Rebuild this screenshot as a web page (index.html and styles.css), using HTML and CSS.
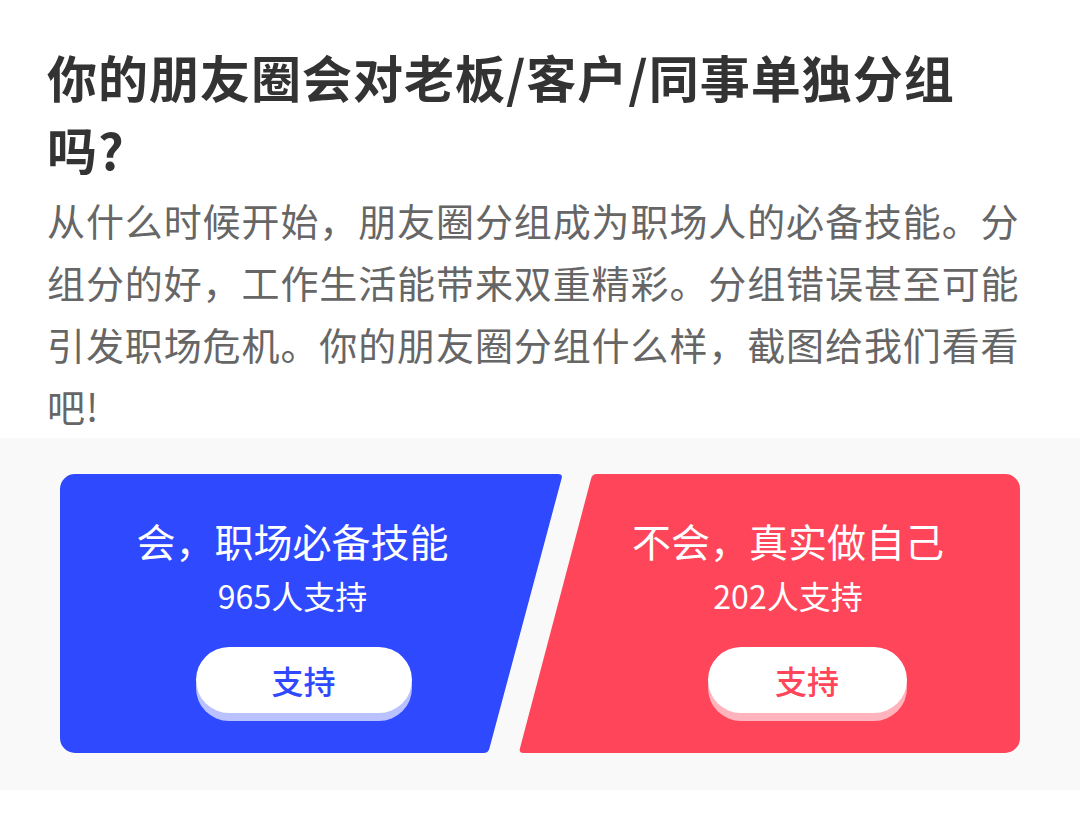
FILE: index.html
```html
<!DOCTYPE html>
<html lang="zh-CN">
<head>
<meta charset="utf-8">
<title>朋友圈分组</title>
<link rel="stylesheet" href="styles.css">
</head>
<body>
<article class="topic">
  <h1 class="topic-title">你的朋友圈会对老板/客户/同事单独分组吗?</h1>
  <p class="topic-desc">从什么时候开始，朋友圈分组成为职场人的必备技能。分组分的好，工作生活能带来双重精彩。分组错误甚至可能引发职场危机。你的朋友圈分组什么样，截图给我们看看吧!</p>
</article>
<section class="vote">
  <div class="vote-card vote-card--yes">
    <div class="vote-option">会，职场必备技能</div>
    <div class="vote-count">965人支持</div>
    <button class="vote-btn vote-btn--yes" type="button">支持</button>
  </div>
  <div class="vote-card vote-card--no">
    <div class="vote-option">不会，真实做自己</div>
    <div class="vote-count">202人支持</div>
    <button class="vote-btn vote-btn--no" type="button">支持</button>
  </div>
</section>
</body>
</html>
```

FILE: styles.css
```css
html, body {
  margin: 0;
  padding: 0;
  background: #ffffff;
}

body {
  width: 1080px;
  height: 817px;
  overflow: hidden;
  font-family: "Noto Sans CJK SC", "Noto Sans", sans-serif;
}

.topic {
  padding: 40px 47px 0;
}

.topic-title {
  margin: 0;
  max-width: 960px;
  font-size: 50px;
  line-height: 72px;
  font-weight: 700;
  letter-spacing: 1px;
  color: #333333;
}

.topic-desc {
  margin: 5px 0 0;
  font-size: 38px;
  line-height: 62px;
  letter-spacing: 0.9px;
  color: #666666;
}

.vote {
  margin-top: 1px;
  background: #f9f9f9;
  padding: 36px 60px 37px;
  display: flex;
}

.vote-card {
  height: 279px;
  box-sizing: border-box;
  padding-top: 42px;
  display: flex;
  flex-direction: column;
  align-items: center;
  color: #ffffff;
}

/* left option: rounded on the outer side, slanted edge on the right */
.vote-card--yes {
  width: 502px;
  padding-right: 37px;
  background: #2f49ff;
  clip-path: path("M15,0 H498 Q503,0 501.6,4.5 L429.4,274.5 Q428.2,279 423.5,279 H15 A15,15 0 0 1 0,264 V15 A15,15 0 0 1 15,0 Z");
}

/* right option: slanted edge on the left, tucked under the left card's slant */
.vote-card--no {
  width: 501px;
  margin-left: -43px;
  padding-left: 37px;
  background: #ff4559;
  clip-path: path("M77.5,0 H486 A15,15 0 0 1 501,15 V264 A15,15 0 0 1 486,279 H4.5 Q-0.3,279 0.9,274.5 L72.1,4.5 Q73.3,0 77.5,0 Z");
}

.vote-option {
  font-size: 39px;
  line-height: 48px;
}

.vote-count {
  margin-top: 11px;
  font-size: 32px;
  line-height: 40px;
}

.vote-btn {
  margin-top: 32px;
  height: 66px;
  border: 0;
  border-radius: 33px;
  background: #ffffff;
  font-family: inherit;
  font-size: 32px;
  font-weight: 500;
  line-height: 66px;
  padding: 0;
}

.vote-btn--yes {
  width: 216px;
  margin-left: 22px;
  color: #2f49ff;
  box-shadow: 0 8px 0 #b9c1ff;
}

.vote-btn--no {
  width: 199px;
  margin-left: 38px;
  color: #ff4559;
  box-shadow: 0 8px 0 #ffb4bd;
}
```
